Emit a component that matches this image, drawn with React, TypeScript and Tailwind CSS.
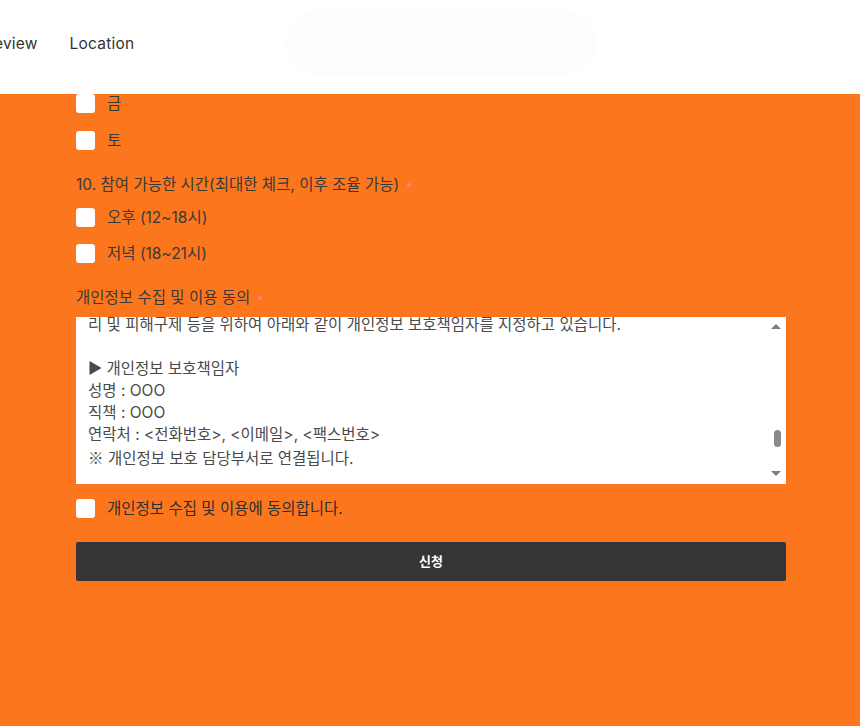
import { useEffect, useRef } from "react";

const font = { fontFamily: 'Inter, "Noto Sans CJK KR", sans-serif' };
const cjk = { fontFamily: '"Noto Sans CJK KR", sans-serif' };

const policyLines = [
  "개인정보 수집 및 이용 동의",
  "",
  "1. 수집하는 개인정보 항목",
  "이름, 연락처, 이메일, 참여 가능 요일 및 시간",
  "",
  "2. 개인정보의 수집 및 이용 목적",
  "프로그램 신청 접수, 참여자 확인 및 안내 연락",
  "",
  "3. 개인정보의 보유 및 이용 기간",
  "수집일로부터 1년간 보관 후 지체 없이 파기합니다.",
  "",
  "4. 동의를 거부할 권리",
  "귀하는 개인정보 수집 및 이용에 대한 동의를 거부할 수 있으며,",
  "동의를 거부할 경우 신청이 제한될 수 있습니다.",
  "",
  "5. 개인정보 보호책임자",
  "회사는 개인정보 처리에 관한 업무를 총괄해서 책임지고, 개인정보 처리와",
  "관련한 정보주체의 불만처리 및 피해구제 등을 위하여 아래와 같이 개인정보 보호책임자를 지정하고 있습니다.",
];

const visibleLines = [
  "",
  "▶ 개인정보 보호책임자",
  "성명 : OOO",
  "직책 : OOO",
  "연락처 : <전화번호>, <이메일>, <팩스번호>",
];

function Check({ label, big }: { label: string; big?: boolean }) {
  return (
    <label className="flex items-center gap-3 h-[19px]">
      <span className="w-[19px] h-[19px] rounded-[3px] bg-white shrink-0" />
      <span className={`text-[15.5px] ${big ? "text-[#2f2f2f]" : "text-[#3a3a3a]"}`}>{label}</span>
    </label>
  );
}

function Label({ text }: { text: string }) {
  return (
    <div className="flex items-center h-[22px] text-[15.5px] text-[#3a3a3a]">
      <span>{text}</span>
      <span className="ml-2 w-[4px] h-[4px] rounded-full bg-[#f7848f]" />
    </div>
  );
}

export default function App() {
  const boxRef = useRef<HTMLDivElement>(null);
  const markRef = useRef<HTMLDivElement>(null);

  useEffect(() => {
    if (boxRef.current && markRef.current) {
      boxRef.current.scrollTop = markRef.current.offsetTop + 3;
    }
  }, []);

  return (
    <div className="min-h-screen bg-[#fc761e]" style={font}>
      {/* Header */}
      <header className="h-[94px] bg-white flex items-center relative overflow-hidden">
        <nav className="flex items-center gap-8 -ml-[16px] -mt-[6px] text-[15.5px] text-[#333] tracking-[0.2px]">
          <span>Review</span>
          <span>Location</span>
        </nav>
        <div className="absolute left-[285px] top-[10px] w-[312px] h-[65px] rounded-full bg-[#fdfdfd]" />
      </header>

      {/* Form */}
      <section className="px-[76px] w-[862px] pb-10">
        <div className="flex flex-col gap-[18px]">
          <Check label="금" />
          <Check label="토" />
        </div>

        <div className="mt-[24px]">
          <Label text="10. 참여 가능한 시간(최대한 체크, 이후 조율 가능)" />
        </div>
        <div className="mt-[12px] flex flex-col gap-[17px]">
          <Check label="오후 (12~18시)" />
          <Check label="저녁 (18~21시)" />
        </div>

        <div className="mt-[24px]">
          <Label text="개인정보 수집 및 이용 동의" />
        </div>

        <div className="mt-[8px] relative h-[167px] bg-white">
          <div
            ref={boxRef}
            className="relative h-full overflow-y-scroll [scrollbar-width:none] px-3 text-[15.5px] leading-[22px] text-[#4a4a4a]"
          >
            {policyLines.slice(0, -1).map((l, i) => (
              <div key={i} className="whitespace-nowrap h-[22px]">
                {l}
              </div>
            ))}
            <div ref={markRef} className="whitespace-nowrap h-[22px]">
              리 및 피해구제 등을 위하여 아래와 같이 개인정보 보호책임자를 지정하고 있습니다.
            </div>
            {visibleLines.map((l, i) => (
              <div key={i} className="whitespace-nowrap h-[22px]">
                {l}
              </div>
            ))}
            <div className="whitespace-nowrap h-[22px]">
              <span style={cjk}>※</span> 개인정보 보호 담당부서로 연결됩니다.
            </div>
            <div className="h-[120px]" />
          </div>
          {/* scrollbar */}
          <div className="absolute right-[5px] top-[7px] w-0 h-0 border-l-[5px] border-r-[5px] border-b-[5px] border-l-transparent border-r-transparent border-b-[#7d7d7d]" />
          <div className="absolute right-[5px] top-[113px] w-[7px] h-[17px] rounded-full bg-[#8a8a8a]" />
          <div className="absolute right-[5px] bottom-[8px] w-0 h-0 border-l-[5px] border-r-[5px] border-t-[5px] border-l-transparent border-r-transparent border-t-[#7d7d7d]" />
        </div>

        <div className="mt-[15px]">
          <Check label="개인정보 수집 및 이용에 동의합니다." big />
        </div>

        <button className="mt-[24px] w-full h-[39px] rounded-[2px] bg-[#353535] text-white text-[13px] font-bold">
          신청
        </button>
      </section>
    </div>
  );
}
